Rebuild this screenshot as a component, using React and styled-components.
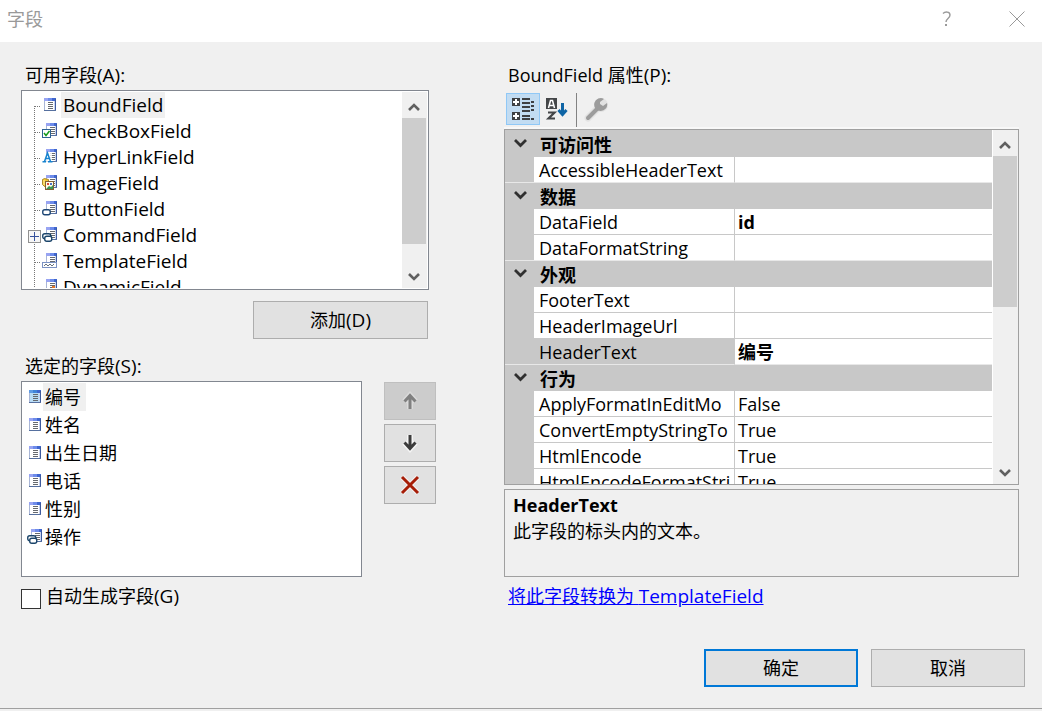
import React from "react";
import styled, { createGlobalStyle, css } from "styled-components";

const GlobalStyle = createGlobalStyle`
  *, *::before, *::after { box-sizing: border-box; }
  body { margin: 0; background: #f0f0f0; }
  body, button, input, table {
    font-family: "Open Sans", "Noto Sans CJK SC", sans-serif;
    font-size: 18px;
    line-height: 26px;
    color: #000;
  }
  ul { list-style: none; margin: 0; padding: 0; }
  svg { display: block; flex: none; }
`;

const Dialog = styled.main`
  display: flex;
  flex-direction: column;
  border-bottom: 1px solid #a0a0a0;
  background: #f0f0f0;
`;

const TitleBar = styled.header`
  display: flex;
  align-items: center;
  height: 42px;
  padding: 0 8px 4px 7px;
  background: #fff;
`;

const Title = styled.h1`
  flex: 1;
  margin: 0;
  font-size: 18px;
  font-weight: 400;
  color: #999;
`;

const CaptionButton = styled.button`
  display: flex;
  align-items: center;
  justify-content: center;
  width: 34px;
  height: 34px;
  margin-left: 36px;
  padding: 0;
  border: 0;
  background: none;
  color: #999;
`;

const Columns = styled.div`
  display: grid;
  grid-template-columns: minmax(0, 415fr) minmax(0, 515fr);
  column-gap: 68px;
  padding: 20px 23px 0 21px;
`;

const Column = styled.section`
  display: flex;
  flex-direction: column;
`;

const Caption = styled.div`
  height: 28px;
  padding-left: 4px;
`;

const Latin = styled.span`
  font-size: 19px;
`;

const TreeBox = styled.div`
  display: flex;
  height: 200px;
  margin-right: 7px;
  padding: 1px;
  border: 1px solid #828790;
  background: #fff;
  overflow: hidden;
`;

const Tree = styled.ul`
  flex: 1;
  min-width: 0;
  overflow: hidden;
  font-size: 19px;
`;

const TreeRow = styled.li`
  display: flex;
  align-items: center;
  height: 26px;
  padding-left: 4px;
`;

const RowText = styled.span`
  margin-left: 3px;
  padding: 0 2px;
  white-space: nowrap;
  ${(p) => p.$selected && css`background: #f0f0f0;`}
  ${(p) => p.$wide && css`margin-left: 0; padding: 0 5px 0 2px;`}
`;

const ScrollTrack = styled.div`
  display: flex;
  flex-direction: column;
  flex: none;
  width: 25px;
  background: #f0f0f0;
`;

const ScrollButton = styled.button`
  display: flex;
  align-items: center;
  justify-content: center;
  height: 26px;
  padding: 3px 1px 0 0;
  border: 0;
  background: #f0f0f0;
`;

const ScrollThumb = styled.div`
  flex: ${(p) => p.$size} 0 0;
  margin-right: 1px;
  background: #cdcdcd;
`;

const ScrollRest = styled.div`
  flex: ${(p) => p.$size} 0 0;
`;

const AddRow = styled.div`
  display: flex;
  justify-content: flex-end;
  margin: 11px 8px 14px 0;
`;

const PushButton = styled.button`
  width: ${(p) => p.$width || 154}px;
  height: 38px;
  padding: 0;
  border: 1px solid #adadad;
  background: #e1e1e1;
  ${(p) => p.$primary && css`border: 2px solid #0078d7;`}
`;

const SelectedArea = styled.div`
  display: flex;
  align-items: flex-start;
  gap: 22px;
`;

const ListBox = styled.ul`
  flex: 1;
  min-width: 0;
  height: 196px;
  && { padding: 1px 5px; }
  border: 1px solid #828790;
  background: #fff;
`;

const ListItem = styled.li`
  display: flex;
  align-items: center;
  height: 28px;
  line-height: 28px;
`;

const SideButtons = styled.div`
  display: flex;
  flex-direction: column;
  gap: 4px;
  padding-top: 1px;
`;

const IconButton = styled.button`
  display: flex;
  align-items: center;
  justify-content: center;
  width: 52px;
  height: 38px;
  padding: 0;
  border: 1px solid #adadad;
  background: #e1e1e1;
  &:disabled { background: #ccc; border-color: #bfbfbf; }
`;

const CheckLabel = styled.label`
  display: flex;
  align-items: flex-start;
  gap: 5px;
  margin-top: 6px;
`;

const CheckBox = styled.input`
  appearance: none;
  width: 20px;
  height: 20px;
  margin: 6px 0 0;
  border: 1px solid #333;
  background: #fff;
`;

const Toolbar = styled.div`
  display: flex;
  align-items: flex-start;
  height: 39px;
  padding: 3px 2px 0;
  border-bottom: 2px solid #f8f8f8;
`;

const ToolButton = styled.button`
  display: flex;
  align-items: center;
  justify-content: center;
  width: 34px;
  height: 32px;
  padding: 0;
  border: 1px solid ${(p) => (p.$active ? "#90c8f6" : "transparent")};
  background: ${(p) => (p.$active ? "#c2dcf2" : "none")};
`;

const ToolSeparator = styled.div`
  width: 1px;
  height: 34px;
  margin: 0 3px 0 2px;
  background: #828282;
`;

const GridBox = styled.div`
  display: flex;
  height: 356px;
  border: 1px solid #a0a0a0;
  background: #fff;
  overflow: hidden;
`;

const GridView = styled.div`
  flex: 1;
  min-width: 0;
  margin-right: 1px;
  border-top: 1px solid #c8c8c8;
  overflow: hidden;
`;

const PropertyTable = styled.table`
  width: 100%;
  table-layout: fixed;
  border-collapse: separate;
  border-spacing: 0;
`;

const GutterCol = styled.col`
  width: 29px;
`;

const NameCol = styled.col`
  width: 201px;
`;

const Gutter = styled.td`
  height: 26px;
  padding: 0;
  background: #c8c8c8;
  ${(p) => p.$last && css`border-bottom: 1px solid #e8e8e8;`}
`;

const GroupName = styled.th`
  height: 26px;
  padding: 2px 6px 0;
  background: #c8c8c8;
  text-align: left;
  font-weight: 700;
  line-height: 24px;
`;

const PropName = styled.th`
  height: 26px;
  padding: 2px 0 0 5px;
  border-right: 1px solid #c8c8c8;
  border-bottom: 1px solid ${(p) => (p.$last ? "#e8e8e8" : "#c8c8c8")};
  background: ${(p) => (p.$active ? "#c8c8c8" : "#fff")};
  text-align: left;
  font-weight: 400;
  line-height: 23px;
  white-space: nowrap;
  overflow: hidden;
`;

const PropValue = styled.td`
  height: 26px;
  padding: 2px 3px 0;
  border-bottom: 1px solid ${(p) => (p.$last ? "#e8e8e8" : "#c8c8c8")};
  background: #fff;
  font-weight: ${(p) => (p.$changed ? 700 : 400)};
  line-height: 23px;
  white-space: nowrap;
  overflow: hidden;
`;

const FoldButton = styled.button`
  display: flex;
  align-items: center;
  justify-content: center;
  width: 29px;
  height: 26px;
  padding: 0 0 2px 2px;
  border: 0;
  background: none;
`;

const HelpPane = styled.div`
  height: 88px;
  margin-top: 4px;
  padding: 2px 8px;
  border: 1px solid #a0a0a0;
`;

const HelpTitle = styled.h2`
  margin: 0;
  font-size: 18px;
  font-weight: 700;
`;

const HelpText = styled.p`
  margin: 0;
`;

const ConvertLink = styled.a`
  align-self: flex-start;
  margin: 6px 0 0 4px;
  color: #00f;
`;

const Footer = styled.footer`
  display: flex;
  justify-content: flex-end;
  gap: 13px;
  padding: 40px 17px 21px;
`;

/* ---- icons ---- */

function WindowShape({ x, y, width, selected }) {
  const w = width;
  return (
    <g transform={`translate(${x} ${y})`} shapeRendering="crispEdges">
      <rect width={w} height="13" fill="#a9b6d6" />
      <rect x="1" y="3" width={w - 3} height="9" fill={selected ? "#b9dcf6" : "#fff"} />
      <rect width={w} height="3" fill={selected ? "#5f9be4" : "#98a4f2"} />
      <rect x="4" width={w - 4} height="3" fill={selected ? "#3f84d8" : "#6d8bea"} />
      <rect x="8" width={w - 8} height="3" fill="#3f66cf" />
      <rect x={w - 2} y="3" width="1" height="9" fill="#c9d4ef" />
      <rect x={w - 1} y="1" width="1" height="12" fill="#3d5a9e" />
      <rect y="12" width={w} height="1" fill="#56709f" />
      <path d="M4 4h5v1H4zM4 6h5v1H4zM4 8h5v1H4zM4 10h5v1H4z" fill="#66696e" />
    </g>
  );
}

function FieldBadge({ kind }) {
  switch (kind) {
    case "check":
      return (
        <g>
          <rect x="0.5" y="6.5" width="8" height="8" fill="#fff" stroke="#2f6394" />
          <path d="M2 10l2 2.500 3.500-4.500" fill="none" stroke="#159a1c" strokeWidth="1.500" />
        </g>
      );
    case "link":
      return (
        <g fill="none">
          <path d="M1 13h9V4H5z" fill="#fff" fillOpacity=".8" />
          <path d="M2.500 12.500L5.500 4l3 8.500M3.500 9.500h4.500M.5 12.800h3.500M6 12.800h4.500" stroke="#1683cf" strokeWidth="1.500" />
        </g>
      );
    case "image":
      return (
        <g>
          <path d="M0.500 4.500l2-1 4 1v7H2.500l-2-2z" fill="#f2c62c" stroke="#9b7412" strokeWidth=".8" />
          <path d="M2 5v5" stroke="#fff3a8" />
          <rect x="3.500" y="6.500" width="8" height="8" fill="#fffbe5" stroke="#826036" />
          <path d="M4 14l3-3 2 1 2-2v4z" fill="#3b9554" />
          <rect x="5" y="8" width="2" height="2" fill="#db493a" />
          <rect x="8" y="8" width="2" height="2" fill="#4a70c8" />
        </g>
      );
    case "button":
      return <rect x="0.750" y="8.750" width="7.500" height="5" rx="2" fill="#fff" stroke="#1e4775" strokeWidth="1.400" />;
    case "command":
      return (
        <g fill="#fff" stroke="#1b456a" strokeWidth="1.400">
          <rect x="0.750" y="6.750" width="8" height="5" rx="2" />
          <rect x="2.750" y="9.250" width="7" height="5" rx="2" />
        </g>
      );
    case "template":
      return (
        <g>
          <rect x="0.500" y="9.500" width="14" height="5" fill="#fff" stroke="#7c93c4" />
          <path d="M2 13l2-2 2 2 2-2 2 2 2-2" fill="none" stroke="#66717d" />
        </g>
      );
    case "dynamic":
      return <path d="M10 7h3v3h2l-4 4-3-4h2z" fill="#e37527" />;
    default:
      return null;
  }
}

function FieldIcon({ kind, selected }) {
  return (
    <svg width="16" height="16" viewBox="0 0 16 16" aria-hidden="true">
      <WindowShape x={kind ? 4 : 2} y={kind ? 0 : 1} width={kind ? 11 : 12} selected={selected} />
      <FieldBadge kind={kind} />
    </svg>
  );
}

function Branch({ first, expandable }) {
  return (
    <svg width="15" height="26" viewBox="0 0 15 26" aria-hidden="true">
      <path d={first ? "M7.500 14v12" : "M7.500 0v26"} stroke="#777" strokeDasharray="1 1" />
      <path d="M8 14.500h6" stroke="#777" strokeDasharray="1 1" />
      {expandable && (
        <g>
          <rect x="1.500" y="8.500" width="12" height="12" fill="#f6f6f6" stroke="#919191" />
          <path d="M3 14.500h9M7.500 10v9" stroke="#35519c" />
        </g>
      )}
    </svg>
  );
}

function ScrollArrow({ down }) {
  return (
    <svg width="12" height="10" viewBox="0 0 12 10" aria-hidden="true">
      <path d={down ? "M1 2l5 5 5-5" : "M1 8l5-5 5 5"} fill="none" stroke="#606060" strokeWidth="2.600" />
    </svg>
  );
}

function FoldArrow() {
  return (
    <svg width="14" height="10" viewBox="0 0 14 10" aria-hidden="true">
      <path d="M1 2L6.500 7.500 12 2" fill="none" stroke="#303030" strokeWidth="2.800" />
    </svg>
  );
}

function MoveArrow({ down, color, halo }) {
  const d = down ? "M10 2v14M4.500 9.500L10 15.500l5.500-6" : "M10 18V4M4.500 10.500L10 4.500l5.500 6";
  return (
    <svg width="20" height="20" viewBox="0 0 20 20" fill="none" aria-hidden="true">
      <path d={d} stroke={halo} strokeWidth="6" />
      <path d={d} stroke={color} strokeWidth="3" />
    </svg>
  );
}

function DeleteIcon() {
  return (
    <svg width="22" height="22" viewBox="0 0 22 22" fill="none" aria-hidden="true">
      <path d="M3 3l16 16M19 3L3 19" stroke="#f3f3f3" strokeWidth="5" />
      <path d="M3 3l16 16M19 3L3 19" stroke="#a61e08" strokeWidth="3" />
    </svg>
  );
}

function CategorizedIcon() {
  return (
    <svg width="24" height="24" viewBox="0 0 24 24" shapeRendering="crispEdges" aria-hidden="true">
      <path d="M1 1h8v8H1zM1 15h8v8H1z" fill="#3e4043" />
      <path d="M4 2h2v2h2v2H6v2H4V6H2V4h2zM4 16h2v2h2v2H6v2H4v-2H2v-2h2z" fill="#fff" />
      <path
        d="M11 1h8v2h-8zM11 5h8v2h-8zM11 9h8v2h-8zM11 13h8v2h-8zM11 18h8v2h-8zM11 21h8v2h-8zM20 4h3v2h-3zM20 8h3v2h-3zM20 12h3v2h-3zM20 21h3v2h-3z"
        fill="#3e4043"
      />
    </svg>
  );
}

function SortIcon() {
  return (
    <svg width="24" height="24" viewBox="0 0 24 24" fill="none" aria-hidden="true">
      <path d="M1 1h11v11H1z" fill="#444648" />
      <path d="M3.500 11l2-7.500h2l2 7.500M4 8.500h5" stroke="#fff" strokeWidth="1.500" />
      <path d="M3 15.500h6.500L3.500 21.500H10" stroke="#444648" strokeWidth="2.200" />
      <path d="M17.500 6v11M13.500 13l4 4.500 4-4.500" stroke="#0e64a5" strokeWidth="3" />
    </svg>
  );
}

function WrenchIcon() {
  return (
    <svg width="26" height="26" viewBox="0 0 26 26" aria-hidden="true">
      <g fill="none" strokeLinecap="round">
        <path d="M4 22L14 12" stroke="#e2e2e2" strokeWidth="7" />
        <circle cx="17" cy="9" r="7" fill="#e2e2e2" />
        <path d="M4 22L14 12" stroke="#9c9c9c" strokeWidth="4" />
      </g>
      <path d="M20 3a6.500 6.500 0 1 0 3 4l-4 3-3-2V6z" fill="#9c9c9c" />
    </svg>
  );
}

function CloseIcon() {
  return (
    <svg width="16" height="16" viewBox="0 0 16 16" aria-hidden="true">
      <path d="M.5.5l15 15M15.500.5l-15 15" stroke="#999" />
    </svg>
  );
}

function HelpIcon() {
  return (
    <svg width="10" height="16" viewBox="0 0 10 16" fill="none" aria-hidden="true">
      <path d="M1 2.500C3 .5 8 .3 8 4c0 3.500-4 3.500-4 7" stroke="#999" strokeWidth="1.400" />
      <path d="M3 13h2v2H3z" fill="#999" />
    </svg>
  );
}

/* ---- parts ---- */

function ScrollBar({ thumb, rest }) {
  return (
    <ScrollTrack>
      <ScrollButton aria-label="向上滚动"><ScrollArrow /></ScrollButton>
      <ScrollThumb $size={thumb} />
      <ScrollRest $size={rest} />
      <ScrollButton aria-label="向下滚动"><ScrollArrow down /></ScrollButton>
    </ScrollTrack>
  );
}

const available = [
  { name: "BoundField" },
  { name: "CheckBoxField", kind: "check" },
  { name: "HyperLinkField", kind: "link" },
  { name: "ImageField", kind: "image" },
  { name: "ButtonField", kind: "button" },
  { name: "CommandField", kind: "command", expandable: true },
  { name: "TemplateField", kind: "template" },
  { name: "DynamicField", kind: "dynamic" },
];

const chosen = [
  { name: "编号" },
  { name: "姓名" },
  { name: "出生日期" },
  { name: "电话" },
  { name: "性别" },
  { name: "操作", kind: "command" },
];

const groups = [
  { name: "可访问性", props: [{ name: "AccessibleHeaderText", value: "" }] },
  {
    name: "数据",
    props: [
      { name: "DataField", value: "id", changed: true },
      { name: "DataFormatString", value: "" },
    ],
  },
  {
    name: "外观",
    props: [
      { name: "FooterText", value: "" },
      { name: "HeaderImageUrl", value: "" },
      { name: "HeaderText", value: "编号", changed: true, active: true },
    ],
  },
  {
    name: "行为",
    props: [
      { name: "ApplyFormatInEditMo", value: "False" },
      { name: "ConvertEmptyStringTo", value: "True" },
      { name: "HtmlEncode", value: "True" },
      { name: "HtmlEncodeFormatStri", value: "True" },
    ],
  },
];

function PropertyGroup({ group }) {
  return (
    <tbody>
      <tr>
        <Gutter>
          <FoldButton aria-label={`折叠 ${group.name}`}><FoldArrow /></FoldButton>
        </Gutter>
        <GroupName colSpan={2} scope="rowgroup">{group.name}</GroupName>
      </tr>
      {group.props.map((p, i) => {
        const last = i === group.props.length - 1;
        return (
          <tr key={p.name}>
            <Gutter $last={last} />
            <PropName scope="row" $active={p.active} $last={last}>{p.name}</PropName>
            <PropValue $changed={p.changed} $last={last}>{p.value}</PropValue>
          </tr>
        );
      })}
    </tbody>
  );
}

export default function App() {
  return (
    <>
      <GlobalStyle />
      <Dialog>
        <TitleBar>
          <Title>字段</Title>
          <CaptionButton aria-label="帮助"><HelpIcon /></CaptionButton>
          <CaptionButton aria-label="关闭"><CloseIcon /></CaptionButton>
        </TitleBar>

        <Columns>
          <Column>
            <Caption id="available-label">可用字段<Latin>(A):</Latin></Caption>
            <TreeBox>
              <Tree role="tree" aria-labelledby="available-label">
                {available.map((f, i) => (
                  <TreeRow key={f.name} role="treeitem" aria-selected={i === 0}>
                    <Branch first={i === 0} expandable={f.expandable} />
                    <FieldIcon kind={f.kind} />
                    <RowText $selected={i === 0}>{f.name}</RowText>
                  </TreeRow>
                ))}
              </Tree>
              <ScrollBar thumb={126} rest={18} />
            </TreeBox>
            <AddRow>
              <PushButton $width={175}>添加<Latin>(D)</Latin></PushButton>
            </AddRow>

            <Caption id="chosen-label">选定的字段<Latin>(S):</Latin></Caption>
            <SelectedArea>
              <ListBox role="listbox" aria-labelledby="chosen-label">
                {chosen.map((f, i) => (
                  <ListItem key={f.name} role="option" aria-selected={i === 0}>
                    <FieldIcon kind={f.kind} selected={i === 0} />
                    <RowText $selected={i === 0} $wide>{f.name}</RowText>
                  </ListItem>
                ))}
              </ListBox>
              <SideButtons>
                <IconButton disabled aria-label="上移"><MoveArrow color="#808080" halo="#dadada" /></IconButton>
                <IconButton aria-label="下移"><MoveArrow down color="#3c3c3c" halo="#f5f5f5" /></IconButton>
                <IconButton aria-label="删除"><DeleteIcon /></IconButton>
              </SideButtons>
            </SelectedArea>
            <CheckLabel>
              <CheckBox type="checkbox" />
              <span>自动生成字段<Latin>(G)</Latin></span>
            </CheckLabel>
          </Column>

          <Column>
            <Caption>BoundField 属性<Latin>(P):</Latin></Caption>
            <Toolbar role="toolbar">
              <ToolButton $active aria-label="按分类顺序"><CategorizedIcon /></ToolButton>
              <ToolButton aria-label="字母顺序"><SortIcon /></ToolButton>
              <ToolSeparator />
              <ToolButton disabled aria-label="属性页"><WrenchIcon /></ToolButton>
            </Toolbar>
            <GridBox>
              <GridView>
                <PropertyTable>
                  <colgroup><GutterCol /><NameCol /><col /></colgroup>
                  {groups.map((g) => <PropertyGroup key={g.name} group={g} />)}
                </PropertyTable>
              </GridView>
              <ScrollBar thumb={151} rest={151} />
            </GridBox>
            <HelpPane>
              <HelpTitle>HeaderText</HelpTitle>
              <HelpText>此字段的标头内的文本。</HelpText>
            </HelpPane>
            <ConvertLink href="#convert">将此字段转换为 <Latin>TemplateField</Latin></ConvertLink>
          </Column>
        </Columns>

        <Footer>
          <PushButton $primary>确定</PushButton>
          <PushButton>取消</PushButton>
        </Footer>
      </Dialog>
    </>
  );
}
